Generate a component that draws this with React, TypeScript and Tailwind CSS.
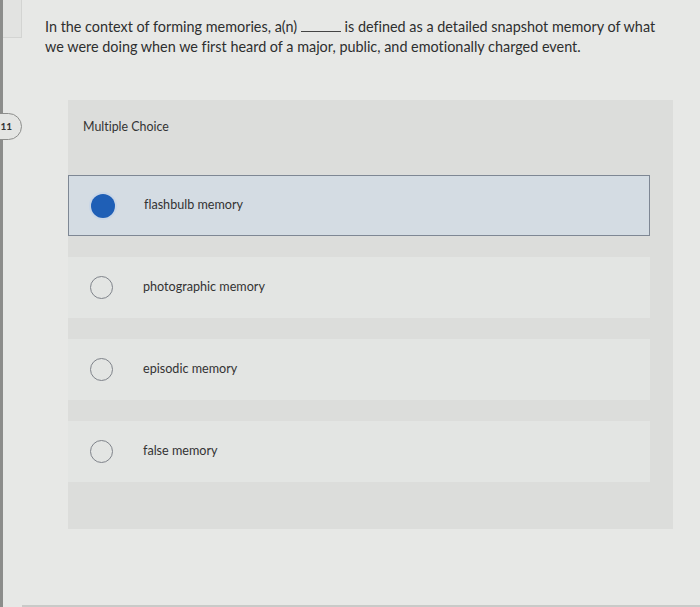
import { clsx } from 'clsx'

const options = [
  { label: 'flashbulb memory', selected: true },
  { label: 'photographic memory', selected: false },
  { label: 'episodic memory', selected: false },
  { label: 'false memory', selected: false },
]

function Radio({ selected }: { selected: boolean }) {
  return selected ? (
    <span className="block h-[24px] w-[24px] shrink-0 rounded-full bg-[#1f5fb6] ring-2 ring-[#c9d6e6]" />
  ) : (
    <span className="block h-[23px] w-[23px] shrink-0 rounded-full border-[1.5px] border-[#7f838a]" />
  )
}

export default function App() {
  return (
    <div
      className="flex h-[607px] w-[700px] overflow-hidden bg-[#e7e8e6] text-[#303131] [font-variant-ligatures:none]"
      style={{ fontFamily: 'Lato, "Open Sans", sans-serif' }}
    >
      <div className="h-full w-[3px] shrink-0 bg-[#8c8d8b]" />

      {/* left gutter with question number */}
      <div className="flex w-[19px] shrink-0 flex-col">
        <div className="h-[38px] border-r border-b border-[#d3d4d2] bg-[#e2e3e1]" />
        <div className="-ml-[10px] mt-[75px] flex h-[27px] w-[29px] items-center justify-end rounded-r-full border border-[#8d8e8c] bg-[#e4e5e3] pr-[9px] text-[10px] font-bold text-[#333]">
          11
        </div>
      </div>

      <div className="flex flex-1 flex-col">
        <p className="pl-[23px] pt-[17px] text-[14.4px] leading-[20px] text-[#2e2f2f]">
          In the context of forming memories, a(n){' '}
          <span className="inline-block w-[40px] border-b border-[#444] align-baseline" />{' '}
          is defined as a detailed snapshot memory of what
          <br />
          we were doing when we first heard of a major, public, and emotionally charged event.
        </p>

        <div className="ml-[46px] mt-[43px] w-[605px] bg-[#dcdddb] pb-[47px] pt-[19px]">
          <div className="pl-[15px] text-[12.4px] leading-[16px] text-[#333]">Multiple Choice</div>

          <div className="mt-[40px] flex w-[582px] flex-col gap-[21px]">
            {options.map((o) => (
              <div
                key={o.label}
                className={clsx(
                  'flex h-[61px] items-center pl-[22px]',
                  o.selected ? 'border border-[#7e8794] bg-[#d4dce3]' : 'bg-[#e3e5e3]'
                )}
              >
                <Radio selected={o.selected} />
                <span className={clsx('text-[12.6px] text-[#333]', o.selected ? 'ml-[29px]' : 'ml-[30px]')}>
                  {o.label}
                </span>
              </div>
            ))}
          </div>
        </div>

        <div className="flex-1" />
        <div className="h-[2px] bg-[#c9cac8]" />
      </div>
    </div>
  )
}
